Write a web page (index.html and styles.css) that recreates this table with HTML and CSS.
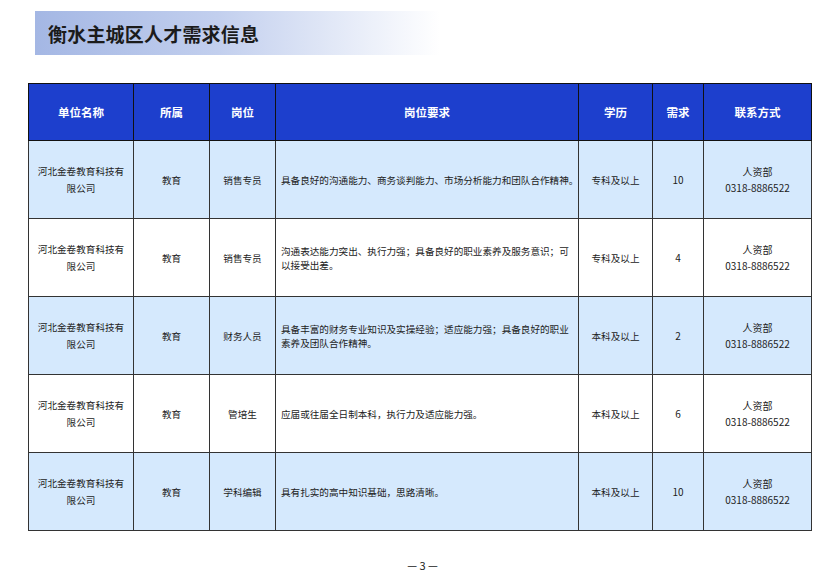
FILE: index.html
```html
<!DOCTYPE html>
<html lang="zh-CN">
<head>
<meta charset="utf-8">
<title>衡水主城区人才需求信息</title>
<link rel="stylesheet" href="styles.css">
</head>
<body>
<div class="page">
  <div class="banner"><h1 class="title">衡水主城区人才需求信息</h1></div>
  <table class="jobs">
    <colgroup>
      <col class="c-company"><col class="c-type"><col class="c-post"><col class="c-req"><col class="c-edu"><col class="c-num"><col class="c-contact">
    </colgroup>
    <thead>
      <tr>
        <th>单位名称</th><th>所属</th><th>岗位</th><th>岗位要求</th><th>学历</th><th>需求</th><th>联系方式</th>
      </tr>
    </thead>
    <tbody>
      <tr class="alt">
        <td class="company">河北金卷教育科技有限公司</td><td>教育</td><td>销售专员</td>
        <td class="req">具备良好的沟通能力、商务谈判能力、市场分析能力和团队合作精神。</td>
        <td>专科及以上</td><td class="num">10</td><td class="contact">人资部<br>0318-8886522</td>
      </tr>
      <tr>
        <td class="company">河北金卷教育科技有限公司</td><td>教育</td><td>销售专员</td>
        <td class="req">沟通表达能力突出、执行力强；具备良好的职业素养及服务意识；可<br>以接受出差。</td>
        <td>专科及以上</td><td class="num">4</td><td class="contact">人资部<br>0318-8886522</td>
      </tr>
      <tr class="alt">
        <td class="company">河北金卷教育科技有限公司</td><td>教育</td><td>财务人员</td>
        <td class="req">具备丰富的财务专业知识及实操经验；适应能力强；具备良好的职业<br>素养及团队合作精神。</td>
        <td>本科及以上</td><td class="num">2</td><td class="contact">人资部<br>0318-8886522</td>
      </tr>
      <tr>
        <td class="company">河北金卷教育科技有限公司</td><td>教育</td><td>管培生</td>
        <td class="req">应届或往届全日制本科，执行力及适应能力强。</td>
        <td>本科及以上</td><td class="num">6</td><td class="contact">人资部<br>0318-8886522</td>
      </tr>
      <tr class="alt">
        <td class="company">河北金卷教育科技有限公司</td><td>教育</td><td>学科编辑</td>
        <td class="req">具有扎实的高中知识基础，思路清晰。</td>
        <td>本科及以上</td><td class="num">10</td><td class="contact">人资部<br>0318-8886522</td>
      </tr>
    </tbody>
  </table>
  <div class="pageno">— 3 —</div>
</div>
</body>
</html>
```
FILE: styles.css
```css
html, body {
  margin: 0;
  padding: 0;
  background: #ffffff;
}
body {
  font-family: "Noto Sans CJK SC", "Noto Sans", sans-serif;
  color: #222222;
}
.page {
  width: 839px;
  height: 579px;
  padding-top: 11px;
  box-sizing: border-box;
}
.banner {
  margin-left: 35px;
  width: 405px;
  height: 44px;
  display: flex;
  align-items: center;
  background: linear-gradient(90deg, #a4b7e4 0%, #c2cfee 45%, #ffffff 100%);
}
.title {
  margin: 0 0 0 13px;
  font-size: 19px;
  font-weight: 700;
  color: #1b1b1b;
  letter-spacing: 0.2px;
}
.jobs {
  margin: 28px 0 0 28px;
  width: 783px;
  border-collapse: collapse;
  table-layout: fixed;
  border: 1.5px solid #2a2a2a;
}
.c-company { width: 105px; }
.c-type { width: 76px; }
.c-post { width: 66px; }
.c-req { width: 303px; }
.c-edu { width: 74px; }
.c-num { width: 51px; }
.c-contact { width: 108px; }
.jobs th {
  height: 56px;
  background: #1d3fcd;
  color: #ffffff;
  font-size: 11.5px;
  font-weight: 700;
  border: 1px solid #111111;
  padding: 0;
  text-align: center;
}
.jobs td {
  height: 77px;
  border: 1px solid #333333;
  padding: 0 4px;
  font-size: 9.6px;
  line-height: 16px;
  text-align: center;
  vertical-align: middle;
  background: #ffffff;
}
.jobs tr.alt td {
  background: #d5e9fd;
}
.jobs td.company {
  padding: 0 7px;
  line-height: 17px;
}
.jobs td.req {
  text-align: left;
  padding: 0 2px 0 5px;
  line-height: 14px;
  white-space: nowrap;
  overflow: hidden;
}
.jobs td.num {
  font-size: 10px;
}
.jobs td.contact {
  font-size: 10px;
  line-height: 16px;
}
.pageno {
  margin-top: 26px;
  text-align: center;
  font-size: 11px;
  color: #222222;
  padding-left: 6px;
}
```
